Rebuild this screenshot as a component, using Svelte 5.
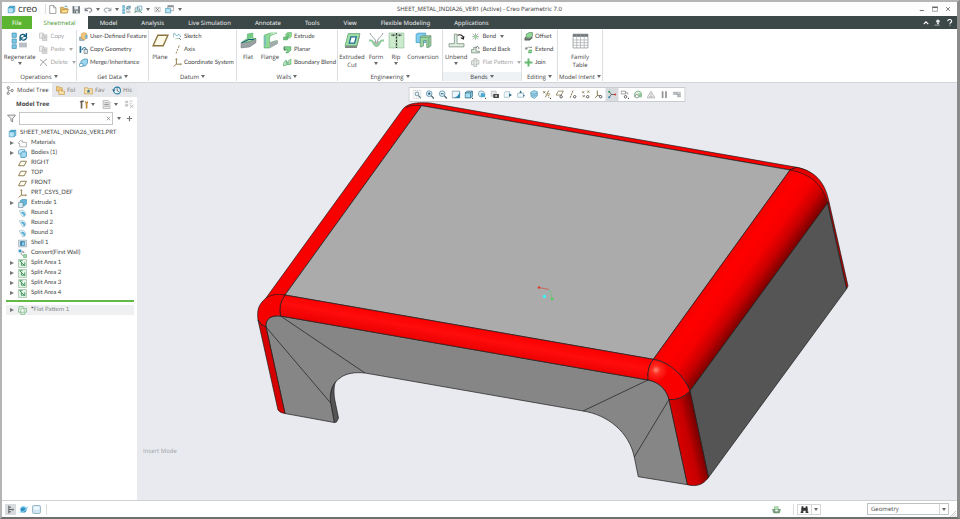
<script>
  const icons = {
    cube: '<path d="M2 5l3-3h9v9l-3 3H2z" fill="#7cc6e6"/><path d="M2 5h9v9H2z" fill="#b9e4f5"/><path d="M2 5l3-3h9l-3 3z" fill="#4aa9d2"/><path d="M2 5h9v9H2zM11 5l3-3M2 5l3-3h9v9l-3 3" fill="none" stroke="#2c86ad" stroke-width=".8"/>',
    page: '<path d="M3 1h7l4 4v10H3z" fill="#fff" stroke="#777" stroke-width="1.2"/><path d="M10 1v4h4" fill="none" stroke="#777"/>',
    folder: '<path d="M1 4h5l1 2h6v8H1z" fill="#e9bd62" stroke="#a67a2a"/><path d="M4 8h11l-2 6H1z" fill="#fbdc93" stroke="#a67a2a"/><path d="M8 3c2-2 4-1 5 1" fill="none" stroke="#1f7fb0" stroke-width="1.5"/>',
    save: '<path d="M1 2h13v13H1z" fill="#6b7378"/><path d="M4 2h7v6H4z" fill="#e6eaec"/><path d="M4 10h7v5H4z" fill="#cdd3d6"/><path d="M5 11h2v3H5z" fill="#555"/>',
    undo: '<path d="M2 5v5h5M3 9c3-5 9-5 11 0-1 3-3 4-5 4" fill="none" stroke="#7c8287" stroke-width="1.8"/>',
    redo: '<path d="M14 5v5H9M13 9C10 4 4 4 2 9c1 3 3 4 5 4" fill="none" stroke="#a4a9ad" stroke-width="1.8"/>',
    regen: '<path d="M1 1h4v4H1zM1 6.500h4v4H1zM1 12h4v3.500H1z" fill="#7cc9e6" stroke="#2f86a8" stroke-width=".6"/><path d="M7.500 10h7.500v4.500H7.500z" fill="#b9bfc4"/><path d="M8.500 5c0-3 4-4 5.500-1M14.500 1v3.200h-3M15 5c-1 3-5 3.500-6 1M8.500 8.500V5.500h3" fill="none" stroke="#14607f" stroke-width="1.200"/>',
    wins: '<path d="M2 5h8v7H2z" fill="#d6eef5" stroke="#777"/><path d="M6 2h8v7H6z" fill="none" stroke="#2f86a8"/><path d="M1 14l4-4M10 11l4 3" stroke="#2b8a55" stroke-width="1.500"/>',
    closew: '<path d="M2 3h12v10H2z" fill="#fff" stroke="#777"/><path d="M5 5l6 6M11 5l-6 6" stroke="#444" stroke-width="1.500"/>',
    stack: '<path d="M5 1h10v9H5z" fill="#fff" stroke="#777"/><path d="M5 1h10v3H5z" fill="#8a9297"/><path d="M1 6h9v8H1z" fill="#b9e4f5" stroke="#2c86ad"/>',
    copy: '<path d="M1 2h7v9H1z" fill="#f3f3f3" stroke="#aaa"/><path d="M6 5h8v10H6z" fill="#e2e2e2" stroke="#aaa"/><path d="M8 8h4M8 10h4M8 12h4" stroke="#aaa"/>',
    del: '<path d="M2 3c4 2 8 6 12 11M14 2C9 5 5 9 2 14" fill="none" stroke="#999" stroke-width="1.700"/>',
    udf: '<path d="M1 9h8v6H1z" fill="#a8bccb" stroke="#6f8798"/><path d="M4 3l5-2 5 2v8l-5 3-5-3z" fill="#f3c877" stroke="#c28b36" stroke-width=".8"/><path d="M11 5h4v7h-4z" fill="#76add1"/>',
    cgeo: '<path d="M1 2h3v12H1z" fill="#2d7295"/><path d="M5 9c3-6 7-6 8 0" fill="none" stroke="#2d7295" stroke-width="2"/><path d="M9 8h6v7H9z" fill="#d5e9f2" stroke="#555"/>',
    merge: '<path d="M4 5l5-3h6v7l-4 5H2z" fill="#9ed7ef" stroke="#2b80a5" stroke-width="1.200"/><path d="M1 10h6v5H1z" fill="#fff" stroke="#2b80a5"/>',
    plane: '<path d="M5.500 3H15l-4.500 10H1z" fill="#fffbe9" stroke="#8c7440" stroke-width="1.300"/>',
    sketch: '<path d="M1 4c3-4 4 5 7 2s3-2 6 3" fill="none" stroke="#3a93b8" stroke-width="1.400"/><path d="M1 2v8M4 12l8-1" stroke="#8ab6a8" stroke-width="1.300"/><path d="M11 11l3 3" stroke="#555" stroke-width="1.500"/>',
    axis: '<path d="M11 1l-1.500 4M8.500 7l-1 3M6.500 12l-1 3" stroke="#8c7440" stroke-width="1.600"/>',
    csys: '<path d="M6 1v10h9M6 11l-5 4" fill="none" stroke="#8c7440" stroke-width="1.600"/><path d="M4 3l2-2 2 2M13 9l2 2-2 2" fill="none" stroke="#8c7440"/>',
    flat: '<path d="M1 10l8-1 6-3v4l-6 4-8 1z" fill="#9aa2a4" stroke="#6d7678" stroke-width=".5"/><path d="M1 10l6-4V2l5-1v5h3l-6 3z" fill="#a3e0a6" stroke="#41985b" stroke-width=".6"/><path d="M7 2l5-1v4L7 7z" fill="#74cb83"/><path d="M2 10l6-3 5 0" fill="none" stroke="#175c7d" stroke-width="1"/>',
    flange: '<path d="M2 3l6-2h6l-5 2c-2 1-2 2-2 7l7-2v3l-7 4H2z" fill="#8fdb94" stroke="#4aa363" stroke-width=".6"/><path d="M7 10l8-2v3l-8 4z" fill="#a4abad"/><path d="M3 4v9" fill="none" stroke="#79b9d2" stroke-width="1.200"/><path d="M8 2l5-1" stroke="#c5efc6"/>',
    extrude: '<path d="M5 4l3-3h7v7l-4 3H5z" fill="#8fdb94" stroke="#3c9656" stroke-width=".8"/><path d="M1 9h7v5H1z" fill="#6fc37b" stroke="#3c9656" stroke-width=".8"/><path d="M9 3v6" stroke="#2d7b47"/>',
    planar: '<path d="M2 3h12v6l-5 5H5l4-5H2z" fill="#7fd38a" stroke="#3c9656"/><path d="M2 3v6h3" fill="none" stroke="#444"/>',
    blend: '<path d="M1 14c0-6 1-8 5-10l1 8zM8 12c0-6 2-8 6-10v9z" fill="#bfe9c0" stroke="#4aa363" stroke-width="1.200"/><path d="M5 9c3-3 5-3 6 2" fill="none" stroke="#4aa363"/>',
    cut: '<path d="M4 1.500h11l-3 11.500H1z" fill="#a0dfa4" stroke="#5e9b6e" stroke-width=".7"/><path d="M1 13h11l3-11v2l-3 11H1z" fill="#7d8b80"/><path d="M6.500 4.500h5l-1.500 6H5z" fill="#fff" stroke="#1b6c93" stroke-width="1.200"/>',
    form: '<path d="M1 8h2c2 0 2 5 5 5s3-5 5-5h2" fill="none" stroke="#8fcb9b" stroke-width="2"/><path d="M2 1c1 4 5 4 5.500 9M14 1c-1 4-5 4-5.500 9" fill="none" stroke="#8d9497" stroke-width=".9"/><path d="M6 9l2 2.500 2-2.500" fill="none" stroke="#777" stroke-width=".9"/>',
    rip: '<path d="M1 1h6.500v14H1zM8.500 1H15v14H8.500z" fill="#ccebcd" stroke="#8bbb93" stroke-width=".6"/><path d="M8 1v14" stroke="#333" stroke-width="1" stroke-dasharray="2 1.200"/><path d="M3 3h4M5 2v2M9 3h4M11 2v2" stroke="#444" stroke-width=".8"/>',
    conv: '<path d="M1 2l2-1h7v9H1z" fill="#7fcdec" stroke="#3b92b9" stroke-width=".6"/><path d="M5 5l2-1.500h8V13l-2 1.500h-2V8H8v5l-2 1H5z" fill="#97d7a0" stroke="#6d8f75" stroke-width=".7"/><path d="M5 5h8v9M13 5l2-1.500" fill="none" stroke="#6d8f75" stroke-width=".7"/>',
    unbend: '<path d="M1 11h5V2h2.500v9H15v3H1z" fill="#dfeee1" stroke="#7e9585" stroke-width=".8"/><path d="M9 3c3-1 5 0 5.500 3M15 4l-.5 2.500L12 5.500" fill="none" stroke="#222" stroke-width="1"/>',
    bend: '<path d="M8 2v12M2 8h12M3 3l10 10M13 3L3 13" stroke="#849088" stroke-width="1.200"/><path d="M5 7h6v4H5z" fill="#9bd7a1"/>',
    bback: '<path d="M1 14V8h4V4h4v7h6v3z" fill="#d9e9dc" stroke="#526b5c"/><path d="M9 5c1-4 5-3 5 2" fill="none" stroke="#333" stroke-width="1.200"/>',
    fpat: '<path d="M5 1h5v3h4v7h-4v4H5v-3H1V5h4z" fill="#e9edea" stroke="#a2aaa5" stroke-width="1.200"/><path d="M5 5h5v6H5z" fill="none" stroke="#b4bab6"/>',
    offset: '<path d="M4 4l5-3h6v6l-5 3H4z" fill="#8fdb94" stroke="#4a6b52"/><path d="M1 10l3-2v3h6l5-3v3l-5 4H1z" fill="#5c6b60"/>',
    extend: '<path d="M1 8l2-4h4L6 8z" fill="#8b9490"/><path d="M8 4h2M11 4h3" stroke="#444" stroke-width="1.500"/><path d="M9 9h5l-1 5H8z" fill="#8fdb94" stroke="#3c9656"/>',
    join: '<path d="M8 1v14M1 8h14" stroke="#65b971" stroke-width="3.500"/>',
    table: '<path d="M1 2h14v13H1z" fill="#fff" stroke="#8b8f92" stroke-width=".7"/><path d="M1 2h14v2.500H1z" fill="#70777b"/><path d="M1 7.500h14M1 10h14M1 12.500h14M4.500 2v13M8 2v13M11.500 2v13" stroke="#9da1a4" stroke-width=".6"/>',
    treeico: '<circle cx="4" cy="3" r="2" fill="#fff" stroke="#555" stroke-width="1.300"/><path d="M4 5v6M4 8h5" stroke="#777" fill="none"/><circle cx="11" cy="8" r="2" fill="#fff" stroke="#555" stroke-width="1.300"/><circle cx="4" cy="13" r="2" fill="#fff" stroke="#555" stroke-width="1.300"/>',
    folders: '<path d="M1 1h4l1 2h5v6H1z" fill="#f4ce80" stroke="#b98a37"/><path d="M5 7h4l1 2h5v6H5z" fill="#fbe3ac" stroke="#b98a37"/>',
    fav: '<path d="M1 3h5l1 2h8v9H1z" fill="#fbe3ac" stroke="#b98a37"/><path d="M8 6l1 2.200h2.500L9.500 10l.8 2.500L8 11l-2.300 1.500.8-2.500-2-1.800H7z" fill="#2b7199"/>',
    hist: '<circle cx="9" cy="8" r="6" fill="#e6f4fa" stroke="#24799f" stroke-width="1.800"/><path d="M9 4v4l3 2" fill="none" stroke="#333" stroke-width="1.300"/><path d="M0 6h6l-3 4z" fill="#1d6488"/>',
    tools: '<path d="M1 3l3-2h4l1 2-3 1v11H3V5z" fill="#6e6257"/><path d="M11 1v4l1 2v8h3V7l1-2V1l-2 3z" fill="#c68a3f"/>',
    doc: '<path d="M2 1h9l3 3v11H2z" fill="#f7f7f7" stroke="#888"/><path d="M4 5h8M4 8h8M4 11h8" stroke="#777" stroke-width="1.300"/>',
    treesr: '<path d="M1 2h4v3H1zM1 8h4v3H1zM8 2h6M8 6h4" fill="#ddd" stroke="#aaa"/><path d="M8 8l7 6M15 8l-6 6" stroke="#b0b0b0" stroke-width="1.500"/>',
    filter: '<path d="M1 2h14l-5 6v6l-3-2V8z" fill="#f2f4f5" stroke="#666" stroke-width="1.300"/>',
    mat: '<path d="M1 6l3-3h4v3h7v8H3V8H1z" fill="#fdfdfd" stroke="#8c8c8c" stroke-width="1.100"/>',
    bodies: '<path d="M1 3l3-2h8v8H1z" fill="#cdeaf6" stroke="#2c86ad"/><path d="M5 7l2-2h8v8l-2 2H5z" fill="#a3d9ef" stroke="#2c86ad" stroke-width="1.200"/>',
    rplane: '<path d="M5 4h10l-4 8H1z" fill="#fffdf0" stroke="#7d6b3f" stroke-width="1.500"/>',
    extr: '<path d="M4 3l3-2h8v8l-3 3H4z" fill="#69bade" stroke="#2c86ad"/><path d="M1 6h8v9H1z" fill="#d4eef8" stroke="#57707c"/>',
    round: '<path d="M2 3l4-1c5 0 8 3 8 8l-3 4H8z" fill="#d9eff8" stroke="#a9bac2"/><path d="M7 5c4 0 6 3 6 6l-3 2c0-4-1-5-5-6z" fill="#4fadd4"/>',
    shell: '<path d="M1 2h14v12H1z" fill="#d3dfe5" stroke="#8ba0aa"/><path d="M4 4h8v8H4z" fill="#2b7fae"/><path d="M7 6h4v5H7z" fill="#8fd2ee"/>',
    convw: '<path d="M1 1h5v5H1z" fill="#3f9dc4"/><path d="M10 10h5v5h-5z" fill="#aee0b2" stroke="#3c9656"/><path d="M6 5l4 1M5 7l3 5M8 3l3 4" fill="none" stroke="#444"/>',
    split: '<path d="M1 1h14v14H1z" fill="#e7f5e8" stroke="#7aa884"/><path d="M3 3l9 9V6M3 3h5M6 6v5h5" fill="none" stroke="#2f8950" stroke-width="1.500"/>',
    patt: '<path d="M2 1h7v3h6v7h-3v4H5v-4H1V5h1z" fill="#e4f4e5" stroke="#7fb588" stroke-width="1.400"/><path d="M5 5h6v6H5z" fill="#fff" stroke="#7fb588" stroke-width="1.200"/>',
    zfit: '<path d="M1 1h14v14H1z" fill="none" stroke="#9aa1a5" stroke-dasharray="2 1.500"/><circle cx="8" cy="7" r="3.500" fill="#e8f4fa" stroke="#54707e" stroke-width="1.300"/><path d="M10.500 10l4 4" stroke="#54707e" stroke-width="2"/>',
    zin: '<circle cx="6.500" cy="6.500" r="5" fill="#eaf6fb" stroke="#3c7f9c" stroke-width="1.300"/><path d="M6.500 4v5M4 6.500h5" stroke="#14587a" stroke-width="1.800"/><path d="M10 10l5 5" stroke="#49616d" stroke-width="2.200"/>',
    zout: '<circle cx="6.500" cy="6.500" r="5" fill="#eaf6fb" stroke="#3c7f9c" stroke-width="1.300"/><path d="M4 6.500h5" stroke="#14587a" stroke-width="1.800"/><path d="M10 10l5 5" stroke="#49616d" stroke-width="2.200"/>',
    repaint: '<path d="M1 2h14v12H1z" fill="#eaf6fb" stroke="#5c7683"/><path d="M15 2v12H3c6-1 10-5 12-12z" fill="#2c86ad"/>',
    shade: '<path d="M1 5l4-3h9v9l-3 3H1z" fill="#a8ddf2" stroke="#1f5e7b" stroke-width="1.300"/><path d="M1 5h10v9M11 5l3-3" fill="none" stroke="#1f5e7b" stroke-width="1.300"/><path d="M15 13v3h-2z" fill="#222"/>',
    persp: '<circle cx="7" cy="7" r="5.500" fill="#d6eef8" stroke="#5a7c8b"/><path d="M7 5l7 2-1 6-8-1z" fill="#4da9cf"/><path d="M15 13v3h-2z" fill="#222"/>',
    cam: '<path d="M1 2h9v9H1z" fill="#e3e7e9" stroke="#9aa1a5"/><path d="M5 7h10v7H5z" fill="#444"/><circle cx="10" cy="10.500" r="2" fill="#bbb"/>',
    boxr: '<path d="M1 5l2-2h8v9l-1 1H1z" fill="#eef8fc" stroke="#7fa3b2"/><path d="M10 6l5 3-5 3z" fill="#1f5e7b"/>',
    boxu: '<path d="M2 6h9l2-1v8H2z" fill="#eef8fc" stroke="#7fa3b2"/><path d="M7 1l3 4H5z" fill="#1f5e7b"/><path d="M12 8l3 2-3 2z" fill="#1f5e7b"/>',
    sphere: '<path d="M2 4l6-3 6 2v7l-5 5-6-3z" fill="#a5d7ec" stroke="#3b86a8"/><path d="M2 6c4 2 8 2 12-1M3 10c3 1 7 1 10-1" fill="none" stroke="#3b86a8"/>',
    datum: '<path d="M1 2l4 4M5 2L1 6M11 1L5 13" stroke="#6f6136" stroke-width="1.400"/><path d="M8 7h6M9 10h3M10 13h2" stroke="#8c7440" stroke-width="1.400"/><path d="M15 13v3h-2z" fill="#222"/>',
    dplane: '<path d="M5 2h9l-4 7H1z" fill="none" stroke="#6f6136" stroke-width="1.200"/><circle cx="10" cy="12" r="2.200" fill="#fff" stroke="#333" stroke-width="1.300"/>',
    daxis: '<path d="M8 1L3 14" stroke="#6f6136" stroke-width="1.500" stroke-dasharray="4 1"/><circle cx="11" cy="12" r="2.200" fill="#fff" stroke="#333" stroke-width="1.300"/>',
    dpoint: '<path d="M1 2l4 4M5 2L1 6M10 1l4 4M14 1l-4 4M2 9l4 4M6 9l-4 4" stroke="#6f6136" stroke-width="1.200"/><circle cx="11" cy="12" r="2.200" fill="#fff" stroke="#333" stroke-width="1.300"/>',
    dcsys: '<path d="M5 1v9h6M5 10l-4 4" fill="none" stroke="#6f6136" stroke-width="1.500"/><circle cx="11" cy="12" r="2.200" fill="#fff" stroke="#333" stroke-width="1.300"/>',
    spin: '<path d="M7 8L3 3M7 8h7M7 8l-4 5" stroke="#555" stroke-width="1.500"/><circle cx="3" cy="3" r="1.800" fill="#2a9d54"/><circle cx="14" cy="8" r="1.800" fill="#d33"/><circle cx="3" cy="13" r="1.800" fill="#258ab8"/>',
    annot: '<path d="M1 2h8v5H1zM9 5h4v3" fill="none" stroke="#777" stroke-width="1.200"/><circle cx="9" cy="12" r="2.200" fill="#fff" stroke="#333" stroke-width="1.300"/><path d="M15 13v3h-2z" fill="#222"/>',
    simul: '<path d="M2 8c0-7 10-8 12-2v6H2z" fill="#dff0e0" stroke="#569467" stroke-width="1.300"/><circle cx="6" cy="11" r="3" fill="#fff" stroke="#555"/><path d="M9 6h5v6H9z" fill="#8cc796"/>',
    tri: '<path d="M8 2l7 12H1z" fill="#f0f0f0" stroke="#aaa" stroke-width="1.300"/><path d="M8 6v4M5 12h6" stroke="#aaa" stroke-width="1.500"/>',
    pause: '<path d="M4 2h3v12H4zM10 2h3v12h-3z" fill="#8e9396"/>',
    stop: '<path d="M1 3h14v10H8V9H1z" fill="#c4c7c9"/><path d="M1 5h8M6 8h7M9 11h5" stroke="#8f9396"/>',
    st1: '<path d="M5 1v14M5 4h4M5 8h7M5 12h4" stroke="#555" stroke-width="1.600"/><circle cx="12" cy="8" r="2" fill="#777"/>',
    st2: '<circle cx="8" cy="8" r="5.500" fill="#2c8fc4"/><path d="M1 12c4 2 12-2 14-9M3 5c3-3 8-2 10 2" fill="none" stroke="#8ed0ee" stroke-width="2"/>',
    st3: '<rect x="1" y="1" width="14" height="14" rx="2" fill="#cfe8f5" stroke="#7d9db0" stroke-width="1.300"/><path d="M3 3h10v5H3z" fill="#f4fbff"/>',
    stg: '<path d="M4 3h7v5H4z" fill="#b4e3b2" stroke="#7cae80"/><path d="M1 8h4v4h6V8h4l-2 6H3z" fill="#7cc083" stroke="#526b5c"/>',
    bino: '<path d="M3 2h3v3h4V2h3l2 12h-5v-4H6v4H1z" fill="#333"/><path d="M3 8v4M13 8v4" stroke="#aaa"/>',
    up: '<path d="M2 11l6-6 6 6" fill="none" stroke="#fff" stroke-width="3"/>',
    bulb: '<circle cx="9" cy="5" r="4" fill="#e4e8e8"/><path d="M7 9h4v3H7z" fill="#e4e8e8"/><path d="M1 14h12" stroke="#aab2b2" stroke-width="2"/>',
    help: '<path d="M4 5c0-5 9-5 9 0 0 3-4 3-4 6M9 13v2" fill="none" stroke="#fff" stroke-width="2.600"/>',
    min: '<path d="M2 12h11" stroke="#777" stroke-width="3"/>',
    max: '<path d="M1 2h14v12H1z" fill="none" stroke="#666" stroke-width="1.500"/><path d="M1 4h14" stroke="#666" stroke-width="3"/>',
    x: '<path d="M3 3l10 10M13 3L3 13" stroke="#666" stroke-width="2.200"/>',
    plus: '<path d="M8 2v12M2 8h12" stroke="#777" stroke-width="2.600"/>',
    sx: '<path d="M4 4l8 8M12 4l-8 8" stroke="#777" stroke-width="1.500"/>'
  };

  const tabs = ['Model', 'Analysis', 'Live Simulation', 'Annotate', 'Tools', 'View', 'Flexible Modeling', 'Applications'];

  const groups = [
    { name: 'Operations', cls: 'w75', big: [{ t: ['Regenerate'], i: 'regen', w: 'b36', arrow: true }],
      small: [{ t: 'Copy', i: 'copy', off: true }, { t: 'Paste', i: 'copy', off: true, arrow: true }, { t: 'Delete', i: 'del', off: true, arrow: true }] },
    { name: 'Get Data', cls: 'w72', big: [],
      small: [{ t: 'User-Defined Feature', i: 'udf' }, { t: 'Copy Geometry', i: 'cgeo' }, { t: 'Merge/Inheritance', i: 'merge' }] },
    { name: 'Datum', cls: 'w88', big: [{ t: ['Plane'], i: 'plane', w: 'b22' }],
      small: [{ t: 'Sketch', i: 'sketch' }, { t: 'Axis', i: 'axis' }, { t: 'Coordinate System', i: 'csys' }] },
    { name: 'Walls', cls: 'w101', big: [{ t: ['Flat'], i: 'flat', w: 'b22' }, { t: ['Flange'], i: 'flange', w: 'b22' }],
      small: [{ t: 'Extrude', i: 'extrude' }, { t: 'Planar', i: 'planar' }, { t: 'Boundary Blend', i: 'blend' }] },
    { name: 'Engineering', cls: 'w104', big: [{ t: ['Extruded', 'Cut'], i: 'cut', w: 'b28' }, { t: ['Form'], i: 'form', w: 'b20', arrow: true }, { t: ['Rip'], i: 'rip', w: 'b20', arrow: true }, { t: ['Conversion'], i: 'conv', w: 'b34' }], small: [] },
    { name: 'Bends', cls: 'w79', lit: true, big: [{ t: ['Unbend'], i: 'unbend', w: 'b28', arrow: true }],
      small: [{ t: 'Bend', i: 'bend', arrow: true }, { t: 'Bend Back', i: 'bback' }, { t: 'Flat Pattern', i: 'fpat', off: true, arrow: true }] },
    { name: 'Editing', cls: 'w36', big: [],
      small: [{ t: 'Offset', i: 'offset' }, { t: 'Extend', i: 'extend' }, { t: 'Join', i: 'join' }] },
    { name: 'Model Intent', cls: 'w45', big: [{ t: ['Family', 'Table'], i: 'table', w: 'b44' }], small: [] }
  ];

  const tree = [
    ['Materials', 'mat', true], ['Bodies (1)', 'bodies', true], ['RIGHT', 'rplane'], ['TOP', 'rplane'], ['FRONT', 'rplane'],
    ['PRT_CSYS_DEF', 'csys'], ['Extrude 1', 'extr', true], ['Round 1', 'round'], ['Round 2', 'round'], ['Round 3', 'round'],
    ['Shell 1', 'shell'], ['Convert(First Wall)', 'convw'], ['Split Area 1', 'split', true], ['Split Area 2', 'split', true],
    ['Split Area 3', 'split', true], ['Split Area 4', 'split', true]
  ];

  const viewTools = [
    ['Refit', 'zfit'], ['Zoom In', 'zin'], ['Zoom Out', 'zout'], ['Repaint', 'repaint'], ['Display Style', 'shade'],
    ['Saved Orientations', 'persp'], ['View Manager', 'cam'], ['Section', 'boxr'], ['Explode', 'boxu'], ['Perspective', 'sphere'],
    ['Datum Filters', 'datum'], ['Planes', 'dplane'], ['Axes', 'daxis'], ['Points', 'dpoint'], ['Csys', 'dcsys'],
    ['Spin Center', 'spin'], ['Annotations', 'annot'], ['Simulate', 'simul'], ['Warnings', 'tri'], ['Pause', 'pause'], ['Stop', 'stop']
  ];
</script>

{#snippet icon(name, size = 's9')}
  <svg class="ico {size}" viewBox="0 0 16 16" aria-hidden="true">{@html icons[name]}</svg>
{/snippet}

{#snippet caret()}
  <span class="caret" aria-hidden="true"></span>
{/snippet}

<div class="app">
  <header class="titlebar">
    <div class="brand">{@render icon('cube')}<span class="logo">creo</span></div>
    <div class="quick">
      <button aria-label="New">{@render icon('page')}</button>
      <button aria-label="Open">{@render icon('folder')}</button>
      <button aria-label="Save">{@render icon('save')}</button>
      <button class="drop" aria-label="Undo">{@render icon('undo')}{@render caret()}</button>
      <button class="drop" aria-label="Redo">{@render icon('redo')}{@render caret()}</button>
      <button aria-label="Regenerate model">{@render icon('regen')}</button>
      <button class="drop" aria-label="Windows">{@render icon('wins')}{@render caret()}</button>
      <button class="mid" aria-label="Close window">{@render icon('closew', 's7')}</button>
      <button aria-label="Model display">{@render icon('stack')}</button>
      <button class="mid" aria-label="Customize toolbar">{@render caret()}</button>
    </div>
    <h1>SHEET_METAL_INDIA26_VER1 (Active) - Creo Parametric 7.0</h1>
    <div class="winctl">
      <button aria-label="Minimize">{@render icon('min', 's6')}</button>
      <button aria-label="Maximize">{@render icon('max', 's6')}</button>
      <button aria-label="Close">{@render icon('x', 's6')}</button>
    </div>
  </header>

  <nav class="tabs">
    <button class="file">File</button>
    <button class="active">Sheetmetal</button>
    {#each tabs as tab}<button>{tab}</button>{/each}
    <div class="tabctl">
      <button aria-label="Minimize ribbon">{@render icon('up', 's6')}</button>
      <button aria-label="Learning">{@render icon('bulb', 's7')}</button>
      <button aria-label="Help">{@render icon('help', 's7')}</button>
    </div>
  </nav>

  <section class="ribbon">
    {#each groups as g}
      <div class="group {g.cls}">
        <div class="tools">
          {#each g.big as b}
            <button class="big {b.w}">
              {@render icon(b.i, 's17')}
              <span>{#each b.t as line}<span class="line">{line}</span>{/each}</span>
              {#if b.arrow}{@render caret()}{/if}
            </button>
          {/each}
          {#if g.small.length}
            <div class="stackcol">
              {#each g.small as s}
                <button class="small" class:off={s.off}>{@render icon(s.i)}<span>{s.t}</span>{#if s.arrow}{@render caret()}{/if}</button>
              {/each}
            </div>
          {/if}
        </div>
        <button class="gname" class:lit={g.lit}>{g.name}{@render caret()}</button>
      </div>
    {/each}
  </section>

  <main>
    <aside>
      <div class="ptabs">
        <button class="active">{@render icon('treeico')}<span>Model Tree</span></button>
        <button>{@render icon('folders')}<span>Fol</span></button>
        <button>{@render icon('fav')}<span>Fav</span></button>
        <button>{@render icon('hist')}<span>His</span></button>
      </div>
      <div class="phead">
        <h2>Model Tree</h2>
        <button class="drop" aria-label="Settings">{@render icon('tools')}{@render caret()}</button>
        <button class="drop" aria-label="Show">{@render icon('doc')}{@render caret()}</button>
        <button aria-label="Find in tree">{@render icon('treesr')}</button>
      </div>
      <div class="search">
        {@render icon('filter')}
        <div class="field">
          <input type="text" aria-label="Filter the tree" />
          <button aria-label="Clear">{@render icon('sx', 's7')}</button>
        </div>
        <button aria-label="Filter options">{@render caret()}</button>
        <button aria-label="Add filter">{@render icon('plus', 's7')}</button>
      </div>
      <div class="root">{@render icon('cube')}<span>SHEET_METAL_INDIA26_VER1.PRT</span></div>
      <ul>
        {#each tree as [label, ic, open]}
          <li><span class="twist" class:open></span>{@render icon(ic)}<span>{label}</span></li>
        {/each}
      </ul>
      <div class="insert"></div>
      <ul>
        <li class="held"><span class="twist open"></span>{@render icon('patt')}<span><b>*</b>Flat Pattern 1</span></li>
      </ul>
    </aside>

    <div class="canvas">
      <svg class="model" viewBox="137 83 820 417" role="img" aria-label="Sheet metal part">
        <defs>
          <linearGradient id="side" gradientUnits="userSpaceOnUse" x1="720" y1="267" x2="760" y2="296">
            <stop offset="0" stop-color="#f40000" /><stop offset=".2" stop-color="#ff0000" /><stop offset=".5" stop-color="#f60000" />
            <stop offset=".75" stop-color="#c80000" /><stop offset="1" stop-color="#780000" />
          </linearGradient>
          <linearGradient id="front" gradientUnits="userSpaceOnUse" x1="469" y1="327" x2="465" y2="349">
            <stop offset="0" stop-color="#fa0000" /><stop offset=".45" stop-color="#ff0c0c" /><stop offset="1" stop-color="#ea0000" />
          </linearGradient>
          <linearGradient id="leg" gradientUnits="userSpaceOnUse" x1="678" y1="442" x2="699" y2="437">
            <stop offset="0" stop-color="#d80000" /><stop offset=".5" stop-color="#c60000" /><stop offset="1" stop-color="#7c0000" />
          </linearGradient>
          <radialGradient id="shine" gradientUnits="userSpaceOnUse" cx="656" cy="370" r="12">
            <stop offset="0" stop-color="#ff8a7a" /><stop offset=".35" stop-color="#ff2a20" /><stop offset="1" stop-color="#f80000" />
          </radialGradient>
        </defs>
        <g stroke="#1c1c1c" stroke-width=".7" stroke-linejoin="round">
          <path fill="#f80000" d="M401.700 110.700C406 104 414 102 430 103L796.700 167.300 790 170 421.700 105.700 285 295 266 298Z" />
          <path fill="none" d="M406 107.500C411 105 416 105 421.700 105.700" />
          <path fill="#ababab" d="M421.700 105.700L790 170 653.300 359.300 285 295Z" />
          <path fill="url(#side)" d="M790 170L796.700 167.500C813 170 825 184 828 203L690 391C685 377 669 361 653.300 359.300Z" />
          <path fill="#e60000" d="M790 170L796.700 167.300C815 171 825 182 829 202L827.500 203C824 187 812 174 790 170Z" />
          <path fill="#b40000" d="M829 202L848 286 846.500 289 827.500 203Z" />
          <path fill="#555" d="M827.500 203L846.500 289 708.500 477.500 690 391Z" />
          <path fill="#555" d="M336 381C333 386 334 396 335 401L338.500 418 336.500 422 334.300 422.500 330.500 403C330 394 331 387 336 381Z" />
          <path fill="#868686" d="M280.500 316L648 380C660 382 667 391 669 399.500L687.500 484.700 638.300 476.700 634.300 457C629 432 608 415 583 411L365 373C356 372 346 373 340 378C332 383 329 393 330.700 403L334.300 422.500 285 413.500 266 327C265 319 271 315 280.500 316Z" />
          <path fill="url(#front)" d="M285 295L653.300 359.300Q647 367 648 380L280.500 316Q278 304 285 295Z" />
          <path fill="#f60000" d="M266 298C272 294 279 294 285 295Q278 304 280.500 316C271 315 265 319 266 327Q261 326 258 320C257 310 258 305 266 298Z" />
          <path fill="#d60000" d="M258 320L278 410Q280 413 285 413.500L266 327Q261 326 258 320Z" />
          <path fill="url(#shine)" d="M653.300 359.300C670 362 684 376 690 391Q680 401 669 399.500C667 391 660 382 648 380Q647 367 653.300 359.300Z" />
          <path fill="url(#leg)" d="M669 399.500Q680 401 690 391L708.500 477.500C703 485 696 487 687.500 484.700Z" />
          <path fill="none" d="M280.500 316L365 373M266 327L330.700 403M648 380L583 411M669 399.500L634.300 457" />
        </g>
        <path d="M539 287.500L549 289.500" stroke="#d24a3c" stroke-width=".7" />
        <path d="M545 296L549.500 290.500" stroke="#5fc9cf" stroke-width=".5" />
        <path d="M550 290L552 298" stroke="#53c95c" stroke-width=".5" />
        <circle cx="539" cy="287.500" r="1.200" fill="#e0392b" />
        <circle cx="544.500" cy="296.500" r="1.700" fill="#3ff0f5" />
        <circle cx="552" cy="299" r="1.200" fill="#3fd84a" />
      </svg>
      <div class="viewbar">
        {#each viewTools as [label, ic]}
          <button class:on={ic === 'spin'} aria-label={label}>{@render icon(ic)}</button>
        {/each}
      </div>
      <p class="mode">Insert Mode</p>
    </div>
  </main>

  <footer>
    <div class="sleft">
      <button class="on" aria-label="Navigator">{@render icon('st1')}</button>
      <button aria-label="Browser">{@render icon('st2')}</button>
      <button aria-label="Full screen">{@render icon('st3')}</button>
    </div>
    <span class="regenstat">{@render icon('stg')}</span>
    <button class="find" aria-label="Find">{@render icon('bino')}<i></i>{@render caret()}</button>
    <div class="pick">
      <select aria-label="Selection filter"><option>Geometry</option></select>
      <i></i>
      {@render caret()}
    </div>
    <svg class="grip" viewBox="0 0 8 8" aria-hidden="true"><path d="M0 8L8 0M3 8l5-5M6 8l2-2" stroke="#b5b5b5" /></svg>
  </footer>
</div>

<style>
  :global(body) { margin: 0; }
  .app {
    box-sizing: border-box;
    display: flex;
    flex-direction: column;
    height: 100vh;
    border: 2px solid #b4b4b4;
    border-right: 3px solid #8b8b8b;
    border-bottom-color: #6f6f6f;
    background: #fff;
    color: #444;
    font: 6px/10px "Open Sans", "Noto Sans", sans-serif;
    text-rendering: geometricPrecision;
    overflow: hidden;
  }
  button, input, select { font: inherit; color: inherit; text-rendering: inherit; }
  button {
    display: flex;
    align-items: center;
    justify-content: center;
    margin: 0;
    padding: 0;
    border: 0;
    background: none;
    white-space: nowrap;
  }
  .ico { display: block; flex: none; }
  .s6 { width: 6px; height: 6px; }
  .s7 { width: 7px; height: 7px; }
  .s9 { width: 9px; height: 9px; }
  .s17 { width: 17px; height: 17px; }
  .caret {
    flex: none;
    border: 2px solid transparent;
    border-top: 3px solid #6a6a6a;
    border-bottom: 0;
  }
  .drop { gap: 3px; }

  .titlebar { position: relative; display: flex; align-items: center; justify-content: space-between; height: 14px; padding: 0 5px; background: #fdfdfd; }
  .brand { display: flex; align-items: center; gap: 2px; width: 38px; border-right: 1px solid #ddd; }
  .logo { font: 10px/10px Lato, sans-serif; color: #444; }
  .quick { display: flex; align-items: center; gap: 3px; margin-right: auto; padding-left: 2px; }
  .mid { padding: 0 1px; }
  h1 { position: absolute; left: 50%; top: 2px; transform: translateX(-50%); margin: 0; font: 6px/10px "Noto Sans", "Open Sans", sans-serif; white-space: nowrap; }
  .winctl { display: flex; gap: 7px; padding-right: 1px; }

  .tabs { display: flex; height: 13px; background: #3c4748; color: #eef1f1; font-family: "Noto Sans", "Open Sans", sans-serif; }
  .tabs > button { padding: 0 12px; }
  .tabs > .file { padding: 0 10px; background: #5cb531; color: #fff; }
  .tabs > .active { background: #fff; color: #4f9a37; }
  .tabctl { display: flex; gap: 5px; margin-left: auto; padding-right: 4px; }

  .ribbon { display: flex; flex: none; height: 53px; border-bottom: 1px solid #d3d6d9; background: #fff; }
  .group { box-sizing: border-box; display: flex; flex-direction: column; margin: 1px 0; border-right: 1px solid #dcdfe1; }
  .w75 { width: 75px; } .w72 { width: 72px; } .w88 { width: 88px; } .w101 { width: 101px; }
  .w104 { width: 105px; } .w79 { width: 79px; } .w36 { width: 36px; } .w45 { width: 45px; }
  .tools { display: flex; flex: 1; }
  .big { flex-direction: column; justify-content: flex-start; padding-top: 2px; line-height: 8px; text-align: center; }
  .big > span:not(.caret) { margin-top: 4px; }
  .big .caret { margin-top: 1px; }
  .line { display: block; }
  .b36 { width: 36px; } .b22 { width: 22px; } .b28 { width: 28px; } .b20 { width: 20px; }
  .b34 { width: 34px; } .b44 { width: 44px; }
  .stackcol { display: flex; flex-direction: column; padding-left: 2px; font-family: Lato, "Open Sans", sans-serif; }
  .small { justify-content: flex-start; gap: 2px; height: 13px; }
  .small .caret { margin-left: 2px; }
  .off { color: #a6a6a6; }
  .off .caret { border-top-color: #aaa; }
  .gname { gap: 2px; height: 9px; }
  .lit { background: #eef2f5; }

  main { display: flex; flex: 1; min-height: 0; }
  aside { flex: none; width: 135px; background: #fff; overflow: hidden; }
  .ptabs { display: flex; height: 14px; background: #e6e8eb; }
  .ptabs button { gap: 2px; width: 28px; padding: 0 2px 0 4px; justify-content: flex-start; overflow: hidden; color: #777; }
  .ptabs .active { width: 50px; background: #fff; color: inherit; }
  .phead { display: flex; align-items: center; gap: 7px; height: 14px; padding: 0 3px 0 14px; }
  .phead h2 { flex: 1; margin: 0; font-size: 6px; font-weight: 700; }
  .search { display: flex; align-items: center; gap: 3px; height: 14px; padding: 0 4px 0 5px; }
  .field { display: flex; flex: 1; height: 11px; margin-right: 1px; border: 1px solid #c4c7c9; }
  .search > button:last-child { margin-left: 2px; }
  input { flex: 1; min-width: 0; margin: 0; padding: 0 2px; border: 0; outline: 0; background: none; }
  .root, li { font-family: Lato, "Open Sans", sans-serif; }
  .root { display: flex; align-items: center; gap: 3px; height: 10px; margin-top: 3px; padding-left: 6px; }
  ul { margin: 0; padding: 0; list-style: none; }
  li { display: flex; align-items: center; gap: 4px; height: 10px; padding-left: 8px; white-space: nowrap; }
  .twist { width: 4px; flex: none; }
  .twist.open { box-sizing: border-box; height: 4px; border: 2px solid transparent; border-left: 4px solid #777; border-right: 0; }
  .insert { height: 2px; margin: 2px 3px 3px 4px; background: #62bb46; }
  .held { margin: 0 3px 0 4px; padding-left: 4px; background: #eef0f2; color: #8a8a8a; }
  .held b { color: #333; }

  .canvas { position: relative; flex: 1; min-width: 0; background: #e8eaef; }
  .model { display: block; width: 100%; height: 100%; }
  .viewbar { position: absolute; top: 4px; left: 50%; transform: translateX(-50%); display: flex; padding: 0 1px; border: 1px solid #c9ccd0; background: #fff; }
  .viewbar button { width: 13px; height: 13px; }
  .on { background: #d9dcde; }
  .mode { position: absolute; left: 6px; bottom: 44px; margin: 0; color: #a0a3a8; }

  footer { display: flex; align-items: center; flex: none; height: 16px; border-top: 1px solid #cfd2d5; background: #fff; padding-left: 3px; }
  .sleft { display: flex; gap: 2px; padding-right: 4px; margin-right: auto; border-right: 1px solid #ddd; }
  .sleft button { width: 11px; height: 11px; }
  .regenstat { padding: 1px 12px 1px 0; border-right: 1px solid #ddd; }
  .find { gap: 2px; height: 11px; margin: 0 46px 0 3px; padding: 0 2px; border: 1px solid #d5d7d9; }
  .find i, .pick i { align-self: stretch; border-left: 1px solid #d5d7d9; }
  .pick { box-sizing: border-box; display: flex; align-items: center; gap: 2px; width: 82px; height: 12px; border: 1px solid #bfc2c4; padding-right: 2px; }
  select { flex: 1; height: 10px; padding: 0 3px; border: 0; background: none; appearance: none; }
  .grip { align-self: flex-end; width: 6px; height: 6px; margin: 0 1px 0 1px; }
</style>
